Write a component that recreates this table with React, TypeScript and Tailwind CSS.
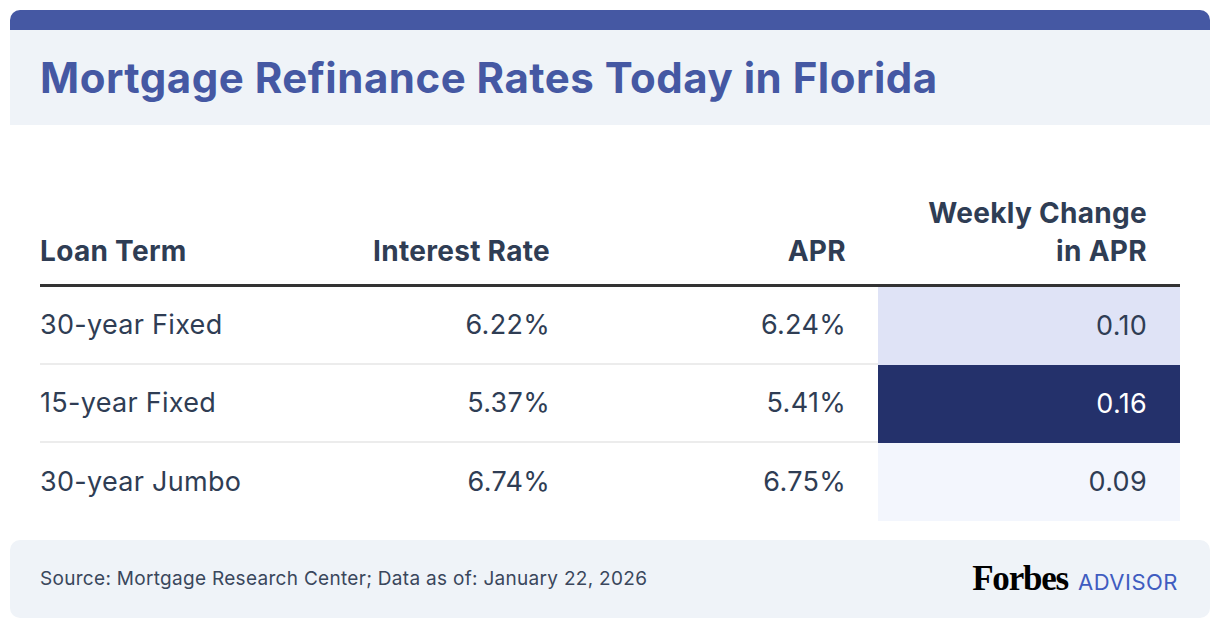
const rows = [
  { term: '30-year Fixed', rate: '6.22%', apr: '6.24%', change: '0.10', tone: 'bg-[#dfe3f6] text-[#2f3d54]' },
  { term: '15-year Fixed', rate: '5.37%', apr: '5.41%', change: '0.16', tone: 'bg-[#24316b] text-white' },
  { term: '30-year Jumbo', rate: '6.74%', apr: '6.75%', change: '0.09', tone: 'bg-[#f3f6fd] text-[#2f3d54]' },
];

export default function App() {
  return (
    <div className="w-[1220px] h-[628px] bg-white p-[10px] font-['Inter','Liberation_Sans',sans-serif] text-[#2f3d54]">
      {/* Header */}
      <div className="rounded-t-[10px] overflow-hidden">
        <div className="h-[20px] bg-[#4558a3]" />
        <div className="h-[95px] bg-[#eff3f8] px-[30px] flex items-center">
          <h1 className="text-[42px] font-bold text-[#4558a3] tracking-[0.5px] leading-none">
            Mortgage Refinance Rates Today in Florida
          </h1>
        </div>
      </div>

      {/* Table */}
      <div className="px-[30px] pt-[69px]">
        <div className="grid grid-cols-[296px_246px_296px_302px] items-end text-[28px] font-bold leading-[38px] tracking-[0.3px] pb-[14px] border-b-[3px] border-[#333333]">
          <div>Loan Term</div>
          <div className="text-right pr-[32px]">Interest Rate</div>
          <div className="text-right pr-[32px]">APR</div>
          <div className="text-right pr-[33px]">
            Weekly Change
            <br />
            in APR
          </div>
        </div>
        {rows.map((r, i) => (
          <div
            key={r.term}
            className="grid grid-cols-[296px_246px_296px_302px] h-[78px] text-[27px] tracking-[0.3px]"
          >
            <div className={`flex items-center ${i < 2 ? 'border-b-2 border-[#ececec]' : ''}`}>{r.term}</div>
            <div className={`flex items-center justify-end pr-[32px] ${i < 2 ? 'border-b-2 border-[#ececec]' : ''}`}>{r.rate}</div>
            <div className={`flex items-center justify-end pr-[32px] ${i < 2 ? 'border-b-2 border-[#ececec]' : ''}`}>{r.apr}</div>
            <div className={`flex items-center justify-end pr-[33px] ${r.tone}`}>{r.change}</div>
          </div>
        ))}
      </div>

      {/* Footer */}
      <div className="mt-[19px] h-[78px] rounded-[10px] bg-[#eff3f8] px-[30px] flex items-center justify-between">
        <span className="text-[19px] tracking-[0.3px] text-[#3a475c]">
          Source: Mortgage Research Center; Data as of: January 22, 2026
        </span>
        <div className="flex items-baseline gap-[10px] pr-[2px]">
          <span className="font-['Liberation_Serif',serif] font-bold text-[35px] text-black tracking-[-1.2px]">Forbes</span>
          <span className="text-[22px] text-[#3f5cc0] tracking-[0.5px]">ADVISOR</span>
        </div>
      </div>
    </div>
  );
}
